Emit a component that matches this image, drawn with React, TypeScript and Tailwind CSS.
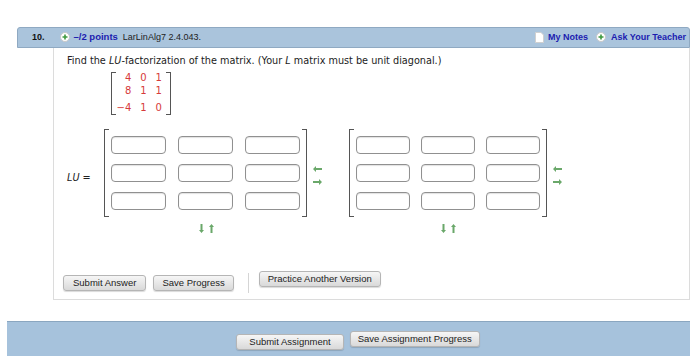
import React from "react"

const hdr = { fontFamily: '"Liberation Sans", Arial, sans-serif' }
const body = { fontFamily: '"DejaVu Sans", Verdana, sans-serif' }

function PlusDot() {
  return (
    <span className="inline-flex h-[10px] w-[10px] items-center justify-center rounded-full border border-[#c8c8c8] bg-white">
      <svg width="6" height="6" viewBox="0 0 6 6">
        <path d="M3 0.5v5M0.5 3h5" stroke="#3f9a3f" strokeWidth="1.6" />
      </svg>
    </span>
  )
}

function Bracket({ side }: { side: "l" | "r" }) {
  return (
    <div
      className={
        "w-[5px] self-stretch border-y-[1.5px] border-[#555] " +
        (side === "l" ? "border-l-[1.5px]" : "border-r-[1.5px]")
      }
    />
  )
}

function Cell({ w }: { w: number }) {
  return (
    <div
      className="h-[18px] rounded-[4px] border-[1.5px] border-[#909090] bg-white shadow-[inset_0_1px_1px_rgba(0,0,0,0.12)]"
      style={{ width: w }}
    />
  )
}

function SideArrows() {
  return (
    <div className="flex flex-col gap-[7px] pt-[6px]">
      <svg width="9" height="6" viewBox="0 0 9 6">
        <path d="M0 3l3-3v2h6v2H3v2z" fill="#6aa86a" />
      </svg>
      <svg width="9" height="6" viewBox="0 0 9 6">
        <path d="M9 3L6 0v2H0v2h6v2z" fill="#6aa86a" />
      </svg>
    </div>
  )
}

function DownUp() {
  return (
    <div className="flex gap-[5px]">
      <svg width="5" height="9" viewBox="0 0 5 9">
        <path d="M1.5 0h2v6H5L2.5 9 0 6h1.5z" fill="#6aa86a" />
      </svg>
      <svg width="5" height="9" viewBox="0 0 5 9">
        <path d="M1.5 9h2V3H5L2.5 0 0 3h1.5z" fill="#6aa86a" />
      </svg>
    </div>
  )
}

function InputMatrix({ w, gap }: { w: number; gap: number }) {
  return (
    <div className="flex flex-col items-center">
      <div className="flex items-center">
        <div className="flex h-[88px] items-stretch">
          <Bracket side="l" />
          <div className="flex flex-col justify-center gap-[10px] px-[2px]">
            {[0, 1, 2].map((r) => (
              <div key={r} className="flex" style={{ gap }}>
                {[0, 1, 2].map((c) => (
                  <Cell key={c} w={w} />
                ))}
              </div>
            ))}
          </div>
          <Bracket side="r" />
        </div>
        <div className="ml-[6px]">
          <SideArrows />
        </div>
      </div>
      <div className="mt-[7px] pr-[14px]">
        <DownUp />
      </div>
    </div>
  )
}

function Btn({ children, className = "" }: { children: React.ReactNode; className?: string }) {
  return (
    <button
      className={
        "h-[16px] rounded-[3px] border border-[#b5b5b5] bg-gradient-to-b from-[#f6f6f6] to-[#d9d9d9] text-[9.5px] leading-none text-[#222] shadow-[0_1px_1px_rgba(0,0,0,0.15)] " +
        className
      }
      style={hdr}
    >
      {children}
    </button>
  )
}

export default function App() {
  return (
    <div className="h-[357px] w-[700px] overflow-hidden bg-white pt-[27px]">
      {/* question header */}
      <div
        className="ml-[17px] flex h-[21px] w-[673px] items-center rounded-t-[3px] border border-[#8fa9c2] bg-[#aac4dc] text-[9px]"
        style={hdr}
      >
        <span className="ml-[14px] font-bold text-[#111]">10.</span>
        <span className="ml-[15px]"><PlusDot /></span>
        <span className="ml-[4px] text-[9.5px] font-bold text-[#1c1cb0]">–/2 points</span>
        <span className="ml-[5px] text-[#222]">LarLinAlg7 2.4.043.</span>
        <div className="ml-auto mr-[3px] flex items-center">
          <svg width="9" height="11" viewBox="0 0 9 11" className="mr-[4px]">
            <path d="M0.5 0.5h5.5l2.5 2.5v7.5h-8z" fill="#fff" stroke="#d0d0d0" />
          </svg>
          <span className="font-bold text-[#1c1cb0]">My Notes</span>
          <span className="ml-[8px]"><PlusDot /></span>
          <span className="ml-[5px] font-bold text-[#1c1cb0]">Ask Your Teacher</span>
        </div>
      </div>

      {/* question body */}
      <div className="ml-[53px] w-[637px] border-x border-b border-[#dcdcdc] pb-[6px]">
        <p className="pl-[13px] pt-[6px] text-[9.7px] text-[#222]" style={body}>
          Find the <i>LU</i>-factorization of the matrix. (Your <i>L</i> matrix must be unit diagonal.)
        </p>

        <div className="ml-[57px] mt-[3px] flex h-[43px] w-[60px] items-stretch">
          <Bracket side="l" />
          <div
            className="grid flex-1 grid-cols-3 content-center gap-y-[1px] pr-[4px] text-right text-[10px] leading-[12px] text-[#d63a3a]"
            style={body}
          >
            <span>4</span><span>0</span><span>1</span>
            <span>8</span><span>1</span><span>1</span>
            <span className="mt-[4px]">−4</span><span className="mt-[4px]">1</span><span className="mt-[4px]">0</span>
          </div>
          <Bracket side="r" />
        </div>

        <div className="mt-[14px] flex items-start">
          <div className="ml-[13px] w-[37px] pt-[42px] text-[9.7px] text-[#222]" style={body}>
            <i>LU</i> =
          </div>
          <InputMatrix w={55} gap={12} />
          <div className="ml-[27px]">
            <InputMatrix w={54} gap={11} />
          </div>
        </div>

        <div className="mt-[40px] flex items-center pl-[9px]">
          <Btn className="px-[9px]">Submit Answer</Btn>
          <Btn className="ml-[7px] px-[8px]">Save Progress</Btn>
          <div className="ml-[14px] mr-[10px] h-[20px] w-px bg-[#d5d5d5]" />
          <Btn className="-mt-[7px] px-[8px]">Practice Another Version</Btn>
        </div>
      </div>

      {/* assignment bar */}
      <div className="ml-[7px] mt-[21px] flex h-[35px] w-[683px] items-center justify-center gap-[6px] border-t border-[#8aa6c0] bg-[#a6c2dc] pl-[19px]">
        <Btn className="mt-[6px] px-[12px]">Submit Assignment</Btn>
        <Btn className="px-[7px]">Save Assignment Progress</Btn>
      </div>
    </div>
  )
}
